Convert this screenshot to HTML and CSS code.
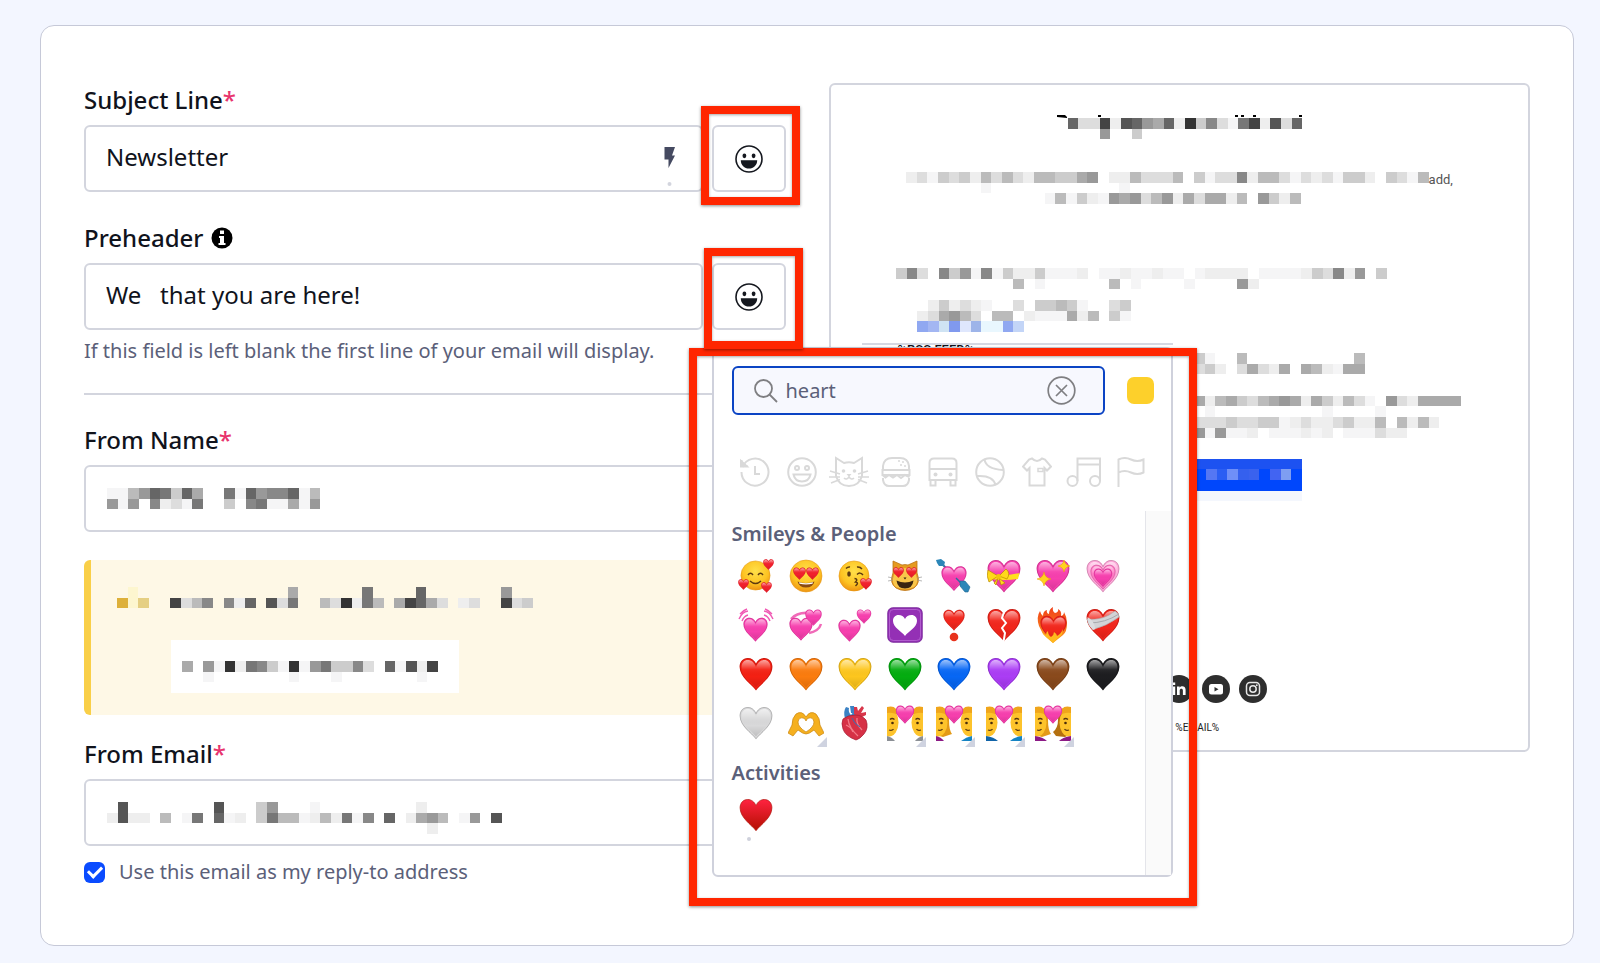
FILE: index.html
```html
<!DOCTYPE html>
<html lang="en">
<head>
<meta charset="utf-8">
<title>Newsletter settings</title>
<link rel="stylesheet" href="styles.css">
</head>
<body>
<svg class="defs" aria-hidden="true">
  <defs>
    <linearGradient id="gloss" x1="0" y1="0" x2="0" y2="1">
      <stop offset="0" stop-color="#fff" stop-opacity=".6"/>
      <stop offset=".35" stop-color="#fff" stop-opacity=".05"/>
      <stop offset=".6" stop-color="#000" stop-opacity="0"/>
      <stop offset="1" stop-color="#000" stop-opacity=".12"/>
    </linearGradient>
    <linearGradient id="suit" x1="0" y1="0" x2="0" y2="1">
      <stop offset="0" stop-color="#ff2340"/>
      <stop offset="1" stop-color="#b30f00"/>
    </linearGradient>
    <radialGradient id="skin" cx=".5" cy=".35" r=".65">
      <stop offset="0" stop-color="#ffe04a"/>
      <stop offset=".65" stop-color="#fdc423"/>
      <stop offset="1" stop-color="#ee9412"/>
    </radialGradient>
    <linearGradient id="flame" x1="0" y1="0" x2="0" y2="1">
      <stop offset="0" stop-color="#f0401a"/>
      <stop offset="1" stop-color="#ff9a1c"/>
    </linearGradient>
    <symbol id="heart" viewBox="0 0 34 34">
      <path fill="currentColor" d="M17 33.500C12.500 27 .6 20.500.6 9.800.6 4.500 4 1 8.700 1c3.700 0 6.700 2 8.300 5.600C18.600 3 21.600 1 25.300 1c4.700 0 8.100 3.500 8.100 8.800C33.400 20.500 21.500 27 17 33.500z"/>
      <path fill="none" stroke="#000" stroke-opacity=".17" d="M17 32.700C12.500 26.600 1.100 20 1.100 9.800c0-5 3.200-8.300 7.600-8.300 3.700 0 6.700 2.300 8.300 6.200 1.600-3.900 4.600-6.200 8.300-6.200 4.400 0 7.600 3.300 7.600 8.300C32.900 20 21.500 26.600 17 32.700z"/>
      <path fill="url(#gloss)" d="M17 30.500C13 25 2.600 19.500 2.600 10c0-4.300 2.600-7 6.100-7 3.700 0 6.700 2.600 8.300 7.200 1.600-4.600 4.600-7.200 8.300-7.200 3.500 0 6.100 2.700 6.100 7C31.400 19.500 21 25 17 30.500z"/>
    </symbol>
    <symbol id="face" viewBox="0 0 34 34">
      <circle cx="17" cy="17" r="16" fill="url(#skin)" stroke="#e59a1c" stroke-width=".6"/>
    </symbol>
    <symbol id="grin" viewBox="0 0 28 28">
      <circle cx="14" cy="14" r="13" fill="#fff" stroke="#15181f" stroke-width="1.600"/>
      <ellipse cx="9.400" cy="10.800" rx="1.900" ry="2.400" fill="#15181f"/>
      <ellipse cx="18.600" cy="10.800" rx="1.900" ry="2.400" fill="#15181f"/>
      <path fill="#15181f" d="M5.800 15.300h16.400c0 5-3.700 8.300-8.200 8.300s-8.200-3.300-8.200-8.300z"/>
    </symbol>
    <symbol id="couple" viewBox="0 0 36 36">
      <ellipse cx="2" cy="17.500" rx="9.500" ry="14" fill="#fdc32b"/>
      <ellipse cx="34" cy="17.500" rx="9.500" ry="14" fill="#fdc32b"/>
      <path fill="#f0a51b" d="M0 2q10-3 12 9-5-4-12-3zM36 2q-10-3-12 9 5-4 12-3z"/>
      <path fill="none" stroke="#56350f" stroke-width="1.300" d="M3 14.500q2-2 4.500 0M28.500 14.500q2-2 4.500 0M2 25q3 1 4.500-.8M29.500 24.200q1.500 1.800 4.500.8"/>
      <circle cx="5.500" cy="18" r="1.300" fill="#4a2b0a"/><circle cx="30.500" cy="18" r="1.300" fill="#4a2b0a"/>
      <svg x="8" y="0" width="20" height="19" viewBox="0 0 34 34" color="#f73fae"><use href="#heart"/></svg>
    </symbol>
  </defs>
</svg>

<main class="card">
  <form class="form">
    <div class="field">
      <label class="label" for="subject">Subject Line<span class="req">*</span></label>
      <div class="row">
        <div class="control">
          <input class="input" id="subject" type="text" value="Newsletter">
          <button class="bolt" type="button" aria-label="Insert personalization">
            <svg width="12" height="40" viewBox="0 0 12 40"><path fill="#454a61" d="M.5 0H11L8 8.500h3L4.500 21v-8.500h-4z"/><circle cx="5.500" cy="37" r="2" fill="#d3d5de"/></svg>
          </button>
        </div>
        <div class="anchor">
          <button class="emoji-btn" type="button" aria-label="Insert emoji"><svg width="28" height="28"><use href="#grin"/></svg></button>
          <span class="frame frame-subject"></span>
        </div>
      </div>
    </div>

    <div class="field">
      <label class="label" for="preheader">Preheader
        <svg class="info" width="22" height="22" viewBox="0 0 22 22"><circle cx="11" cy="11" r="10.500"/><path fill="#fff" d="M9 3.500h4v3.500H9zM8 9h5v7h1.500v2h-7v-2H9v-5H8z"/></svg>
      </label>
      <div class="row">
        <div class="control"><input class="input" id="preheader" type="text" value="We &nbsp; that you are here!"></div>
        <div class="anchor">
          <button class="emoji-btn" type="button" aria-label="Insert emoji"><svg width="28" height="28"><use href="#grin"/></svg></button>
          <section class="picker" aria-label="Emoji picker">
            <div class="picker-top">
              <div class="search">
                <svg width="24" height="24" viewBox="0 0 24 24" fill="none" stroke="#7f7f82" stroke-width="1.800"><circle cx="9.500" cy="9.500" r="8.500"/><path d="M15.500 15.500l7.500 7.500"/></svg>
                <input class="search-input" type="text" value="heart" aria-label="Search emoji">
                <button class="plain" type="button" aria-label="Clear"><svg width="29" height="29" viewBox="0 0 29 29" fill="none" stroke="#7f7f82" stroke-width="1.700"><circle cx="14.500" cy="14.500" r="13.300"/><path d="M9 9l11 11M20 9L9 20"/></svg></button>
              </div>
              <button class="tone" type="button" aria-label="Skin tone"></button>
            </div>
            <nav class="cats">
              <button class="plain" type="button" aria-label="Recent"><svg width="30" height="30" viewBox="0 0 30 30"><path d="M2.500 10A13.500 13.500 0 1 1 1.500 15M1.500 3v6h6M15 9v8h5"/><path fill="#d9d9d9" d="M1 4l6 5.500H1z"/></svg></button>
              <button class="plain" type="button" aria-label="Smileys"><svg width="30" height="30" viewBox="0 0 30 30"><circle cx="15" cy="15" r="13.800"/><circle cx="10" cy="11" r="2"/><circle cx="20" cy="11" r="2"/><path d="M6.500 17.500h17c-1 4.500-4.500 7-8.500 7s-7.500-2.500-8.500-7z"/></svg></button>
              <button class="plain" type="button" aria-label="Animals"><svg width="40" height="32" viewBox="0 0 40 32"><path d="M7 20V2l8 5q5-1.500 10 0l8-5v18q-3 10-13 10T7 20z"/><path stroke-width="1.600" d="M1 15l10 3M0 21h11M2 27l9-3.500M39 15l-10 3M40 21H29M38 27l-9-3.500M15 22q2.500 2.500 5-1 2.500 3.500 5 1"/><path fill="#d9d9d9" stroke="none" d="M17.500 18h5L20 21z"/><g fill="#d9d9d9" stroke="none"><circle cx="14.500" cy="15" r="1.800"/><circle cx="25.500" cy="15" r="1.800"/></g></svg></button>
              <button class="plain" type="button" aria-label="Food"><svg width="30" height="30" viewBox="0 0 30 30"><path d="M2 13V9q1-8 9-8h8q8 0 9 8v4z"/><path d="M1.500 13h27v5h-27zM1.500 18l3 2.500L8 18l4 2.500L16 18l4 3 4-3 4.500 2M2 21v2q1 6 6 6h14q5 0 6-6v-2"/><path stroke-width="1.500" d="M17 4h2M21 5h2M19 8h2M23 9h2"/></svg></button>
              <button class="plain" type="button" aria-label="Travel"><svg width="30" height="30" viewBox="0 0 30 30"><path d="M1.500 23V6q0-4.500 4.500-4.500h18Q28.500 1.500 28.500 6v17zM1.500 12h27M2.500 23v5.500h5V23M22.500 23v5.500h5V23"/><g fill="#d9d9d9" stroke="none"><circle cx="7.500" cy="17.500" r="2"/><circle cx="22.500" cy="17.500" r="2"/></g></svg></button>
              <button class="plain" type="button" aria-label="Sports"><svg width="30" height="30" viewBox="0 0 30 30"><circle cx="15" cy="15" r="13.800"/><path d="M9.500 2q1 10 18.500 11M2 19q16-1 18.500 9"/></svg></button>
              <button class="plain" type="button" aria-label="Objects"><svg width="30" height="30" viewBox="0 0 30 30"><path d="M10 1.500q5 5 10 0l3 1 6 7-4 4-2.500-2.500v17.500h-15V11L5 13.500l-4-4 6-7z"/><path stroke-width="1.500" d="M16 11.500h5v3h-5z"/></svg></button>
              <button class="plain" type="button" aria-label="Music"><svg width="36" height="30" viewBox="0 0 36 30"><path d="M11.500 24V1.500H34V24M11.500 7.500H34"/><circle cx="6.500" cy="24" r="5"/><circle cx="29" cy="24" r="5"/></svg></button>
              <button class="plain" type="button" aria-label="Flags"><svg width="28" height="30" viewBox="0 0 28 30"><path d="M1.500 30V2.500q6-3 12.500 0t12.500 0v13q-6 3-12.500 0t-12.500 0"/></svg></button>
            </nav>
            <div class="picker-body">
              <div class="groups">
                <h3 class="group-title">Smileys &amp; People</h3>
                <div class="grid">
                  <button class="cell" type="button" aria-label="Smiling face with hearts"><svg width="36" height="34" viewBox="0 0 36 34"><svg x="2" y="1" width="31" height="31"><use href="#face"/></svg><path fill="none" stroke="#5d3a10" stroke-width="1.500" d="M10 16q2.500-3.500 5 0M20 16q2.500-3.500 5 0M12 22q5.500 5 11 0"/><svg x="25" y="0" width="11" height="11" color="#f2202c"><use href="#heart"/></svg><svg x="0" y="20" width="11" height="11" color="#f2202c"><use href="#heart"/></svg><svg x="23" y="23" width="11" height="11" color="#f2202c"><use href="#heart"/></svg></svg></button>
                  <button class="cell" type="button" aria-label="Heart eyes"><svg width="34" height="34" viewBox="0 0 34 34"><use href="#face" width="34" height="34"/><svg x="4" y="8" width="13" height="13" color="#f2202c"><use href="#heart"/></svg><svg x="17" y="8" width="13" height="13" color="#f2202c"><use href="#heart"/></svg><path fill="#8a4a10" d="M8.500 22.500q8.500 3 17 0-1.500 6-8.500 6t-8.500-6z"/><path fill="#fff" d="M10 23.300q7 2 14 0l-.5 1.500q-6.500 1.500-13 0z"/></svg></button>
                  <button class="cell" type="button" aria-label="Blowing a kiss"><svg width="34" height="34" viewBox="0 0 34 34"><svg x="0" y="1" width="32" height="32"><use href="#face"/></svg><ellipse cx="11" cy="15" rx="1.800" ry="2.800" fill="#5d3a10"/><path fill="none" stroke="#5d3a10" stroke-width="1.500" d="M8 9.500q2-2 4-1.500M19 8q3-.5 5 2M19 15.500q3-3 6 .5M16.500 19.500q4 .5 1 3.500 4 .5 0 4"/><svg x="22" y="19" width="12" height="12" color="#f2202c"><use href="#heart"/></svg></svg></button>
                  <button class="cell" type="button" aria-label="Heart eyes cat"><svg width="34" height="34" viewBox="0 0 34 34"><path fill="#e59b20" stroke="#bd7415" stroke-width=".8" d="M5 14L5 2l9 4q3-.8 6 0l9-4v12q4 10-3 15-9 5-18 0-7-5-3-15z"/><path fill="#f9c64a" d="M6 16q11-14 22 0 3 8-2 12-9 4-18 0-5-4-2-12z"/><svg x="5" y="8" width="11" height="11" color="#f2202c"><use href="#heart"/></svg><svg x="18" y="8" width="11" height="11" color="#f2202c"><use href="#heart"/></svg><path fill="#3a2510" d="M15.500 18.500h3L17 20.500zM8.500 21.500q8.500 4 17 0-1 8-8.500 8t-8.500-8z"/><path stroke="#999" stroke-width=".7" d="M0 18l5 1M0 22l5-1M34 18l-5 1M34 22l-5-1"/></svg></button>
                  <button class="cell" type="button" aria-label="Heart with arrow"><svg width="36" height="34" viewBox="0 0 36 34"><path stroke="#3a6f9a" stroke-width="2" d="M4 3l26 26"/><svg x="5" y="6" width="26" height="27" color="#f73fae"><use href="#heart"/></svg><path fill="#2b86b8" d="M0 1l5-1 4 3-1 4-5 0-2-3z"/><path fill="none" stroke="#2b6f9f" stroke-width="1.500" d="M20 19l6 6"/><path fill="#2b86b8" stroke="#1f6690" stroke-width=".6" d="M24 22l5 0 5 6-2 5-3 0-5-6z"/></svg></button>
                  <button class="cell" type="button" aria-label="Heart with ribbon"><svg width="34" height="34" viewBox="0 0 34 34"><svg width="34" height="34" color="#f73fae"><use href="#heart"/></svg><path fill="#ffe01e" d="M1.500 15q15 3 31-1l-1.500 6q-14 2-27.500 0z"/><path fill="#ffd91a" stroke="#b98a00" stroke-width=".7" d="M11 17L1 11q-2 6 1 12zM12 17l7-7q5 4 1 10zM11 19l-4 5 2 2zM12 19l2 7 4-2z"/><circle cx="11.500" cy="17.500" r="2.500" fill="#f4c40e"/></svg></button>
                  <button class="cell" type="button" aria-label="Sparkling heart"><svg width="34" height="34" viewBox="0 0 34 34"><svg width="34" height="34" color="#f73fae"><use href="#heart"/></svg><path fill="#ffd21f" stroke="#e8a300" stroke-width=".5" d="M8 13q1 6 7 7-6 1-7 7-1-6-7-7 6-1 7-7zM28 1q.8 5 6 6-5.200 1-6 6-.8-5-6-6 5.200-1 6-6z"/></svg></button>
                  <button class="cell" type="button" aria-label="Growing heart"><svg width="34" height="34" viewBox="0 0 34 34"><svg width="34" height="34" color="#ffa9da"><use href="#heart"/></svg><svg x="3.500" y="5" width="27" height="26" color="#ff78c4"><use href="#heart"/></svg><svg x="7" y="9" width="20" height="19" color="#f73fae"><use href="#heart"/></svg></svg></button>

                  <button class="cell" type="button" aria-label="Beating heart"><svg width="36" height="34" viewBox="0 0 36 34"><svg x="4" y="9" width="27" height="25" color="#f73fae"><use href="#heart"/></svg><path fill="none" stroke="#f05ab4" stroke-width="1.400" d="M1 11q3-7 9-8M2 6q4-4 7-5M4 13q2-5 6-6M35 11q-3-7-9-8M34 6q-4-4-7-5M32 13q-2-5-6-6"/></svg></button>
                  <button class="cell" type="button" aria-label="Revolving hearts"><svg width="34" height="34" viewBox="0 0 34 34"><path fill="none" stroke="#f06ab8" stroke-width="2.500" d="M2 11Q8 4 20 5M20 25q10-2 12-9"/><svg x="0" y="9" width="24" height="24" color="#f73fae"><use href="#heart"/></svg><svg x="16" y="1" width="17" height="17" color="#f73fae"><use href="#heart"/></svg></svg></button>
                  <button class="cell" type="button" aria-label="Two hearts"><svg width="34" height="34" viewBox="0 0 34 34"><svg x="0" y="11" width="23" height="23" color="#f73fae"><use href="#heart"/></svg><svg x="18" y="1" width="16" height="15" color="#f73fae"><use href="#heart"/></svg></svg></button>
                  <button class="cell" type="button" aria-label="Heart decoration"><svg width="36" height="36" viewBox="0 0 36 36"><rect x=".8" y=".8" width="34.400" height="34.400" rx="5" fill="#9430b5" stroke="#7a2a9c"/><rect x="2.500" y="2.500" width="31" height="31" rx="4" fill="none" stroke="#b968d4" stroke-width=".8"/><path fill="#fff" d="M18 29C15 24.500 6 20.500 6 14c0-3.500 2.200-6 5.500-6 3 0 5.300 1.500 6.500 4 1.200-2.500 3.500-4 6.500-4 3.300 0 5.500 2.500 5.500 6 0 6.500-9 10.500-12 15z"/></svg></button>
                  <button class="cell" type="button" aria-label="Heart exclamation"><svg width="34" height="34" viewBox="0 0 34 34"><svg x="6" y="1" width="22" height="22" color="#f2261c"><use href="#heart"/></svg><circle cx="17" cy="29" r="4.300" fill="#e8321c"/></svg></button>
                  <button class="cell" type="button" aria-label="Broken heart"><svg width="34" height="34" viewBox="0 0 34 34"><svg width="34" height="34" color="#f2261c"><use href="#heart"/></svg><path fill="none" stroke="#fff" stroke-width="2" d="M17 4l-2 6 4 5-4 5 3 5-1.500 9"/></svg></button>
                  <button class="cell" type="button" aria-label="Heart on fire"><svg width="34" height="36" viewBox="0 0 34 36"><path fill="url(#flame)" d="M3 19Q0 10 4 4q1 4 3 5 0-5 4-6-1 3 2 4 0-5 4-7-1 4 2 6 4-1 3-4 4 2 3 7 3-1 3-4 3 5 3 11 0 9-4 12l-10 8L7 27z"/><svg x="4" y="8" width="27" height="27" color="#f2261c"><use href="#heart"/></svg><path fill="#ffb81e" d="M6 22q1 5 4 6 0-3 2-4 0 4 3 6 3-2 3-5 3 2 3 4 4-2 6-7 0 6-4 8l-6 6-6-5q-5-4-5-9z"/></svg></button>
                  <button class="cell" type="button" aria-label="Mending heart"><svg width="34" height="34" viewBox="0 0 34 34"><svg width="34" height="34" color="#f2261c"><use href="#heart"/></svg><path fill="#d2d3d6" stroke="#a8a9ad" stroke-width=".6" d="M1 11q16 2 28-8 4 2 4 6-12 9-26 12.500Q2 17 1 11z"/><path fill="none" stroke="#a8a9ad" d="M3 15q16 0 30-9"/><path fill="#dcdde0" d="M1.500 9q6 3 8 12l-2.500 1Q1 16 1.500 9z"/></svg></button>

                  <button class="cell red" type="button" aria-label="Red heart"><svg width="34" height="34"><use href="#heart"/></svg></button>
                  <button class="cell orange" type="button" aria-label="Orange heart"><svg width="34" height="34"><use href="#heart"/></svg></button>
                  <button class="cell yellow" type="button" aria-label="Yellow heart"><svg width="34" height="34"><use href="#heart"/></svg></button>
                  <button class="cell green" type="button" aria-label="Green heart"><svg width="34" height="34"><use href="#heart"/></svg></button>
                  <button class="cell blue" type="button" aria-label="Blue heart"><svg width="34" height="34"><use href="#heart"/></svg></button>
                  <button class="cell purple" type="button" aria-label="Purple heart"><svg width="34" height="34"><use href="#heart"/></svg></button>
                  <button class="cell brown" type="button" aria-label="Brown heart"><svg width="34" height="34"><use href="#heart"/></svg></button>
                  <button class="cell black" type="button" aria-label="Black heart"><svg width="34" height="34"><use href="#heart"/></svg></button>

                  <button class="cell white" type="button" aria-label="White heart"><svg width="34" height="34"><use href="#heart"/></svg></button>
                  <button class="cell toned" type="button" aria-label="Heart hands"><svg width="36" height="34" viewBox="0 0 36 34"><path fill="#f5b01f" stroke="#c98510" stroke-width=".7" d="M18 11Q14 4 8 8q-4 4-4 11l-4 8 5 3 5-6q5 4 8 4t8-4l5 6 5-3-4-8q0-7-4-11-6-4-10 3z"/><path fill="#fff" stroke="#c98510" stroke-width=".7" d="M18 26q-8-5-8-10 1-5 5-4 2 0 3 3 1-3 3-3 4-1 5 4 0 5-8 10z"/></svg></button>
                  <button class="cell" type="button" aria-label="Anatomical heart"><svg width="28" height="36" viewBox="0 0 28 36"><path fill="#3b82c4" d="M4 14Q2 6 5 2l3 1q-1 4 2 7l3-4 3 3-5 8zM9 1h4l1 7h-4z"/><path fill="#d8364a" d="M13 9V2h3l1 4 4-5 2 2-3 5 5-1v3l-6 3z"/><path fill="#d63146" stroke="#a31d33" stroke-width=".7" d="M2 14q5-4 12-4t11 5q3 8-2 14-4 5-8 6Q4 31 2 24q-2-6 0-10z"/><path fill="none" stroke="#f27b88" stroke-width="1.300" d="M7 14q1 9 10 17M16 13q-1 6 5 12M5 20q5 2 7 7"/><path fill="none" stroke="#3b6fb4" d="M11 13q2 6 8 9"/></svg></button>
                  <button class="cell toned" type="button" aria-label="Couple with heart"><svg width="36" height="36" viewBox="0 0 36 36"><use href="#couple"/><path fill="#8b8f95" d="M0 36v-5q5 1 8 5zM36 36v-5q-5 1-8 5z"/></svg></button>
                  <button class="cell toned" type="button" aria-label="Couple: woman, man"><svg width="36" height="36" viewBox="0 0 36 36"><path fill="#e39a17" d="M0 3q13-3 13 12 0 10 3 14l-9 3-7-2z"/><use href="#couple"/><path fill="#8c1a86" d="M0 36v-5q5 1 8 5z"/><path fill="#1584c4" d="M36 36v-5q-6 1-11 5z"/></svg></button>
                  <button class="cell toned" type="button" aria-label="Couple: man, man"><svg width="36" height="36" viewBox="0 0 36 36"><use href="#couple"/><path fill="#1164a8" d="M0 36v-5q8 1 12 5z"/><path fill="#1584c4" d="M36 36v-5q-8 1-12 5z"/></svg></button>
                  <button class="cell toned" type="button" aria-label="Couple: woman, woman"><svg width="36" height="36" viewBox="0 0 36 36"><path fill="#e39a17" d="M0 3q13-3 13 12 0 10 3 14l-9 3-7-2z"/><path fill="#b4700f" d="M36 3q-13-3-13 12 0 8-5 12l3 4 9 1 6-3z"/><use href="#couple"/><path fill="#8c1a86" d="M0 36v-5q8 1 12 5zM36 36v-5q-8 1-12 5z"/></svg></button>
                </div>
                <h3 class="group-title">Activities</h3>
                <div class="grid">
                  <button class="cell dotted" type="button" aria-label="Heart suit"><svg width="34" height="34" viewBox="0 0 34 34"><path fill="url(#suit)" stroke="#b0140c" stroke-width=".7" d="M17 32.700C12.500 26.600 1.100 20 1.100 9.800c0-5 3.200-8.300 7.600-8.300 3.700 0 6.700 2.300 8.300 6.200 1.600-3.900 4.600-6.200 8.300-6.200 4.400 0 7.600 3.300 7.600 8.300C32.900 20 21.500 26.600 17 32.700z"/></svg></button>
                </div>
              </div>
              <div class="scrollbar"></div>
            </div>
          </section>
          <span class="frame frame-preheader"></span>
          <span class="frame frame-picker"></span>
        </div>
      </div>
      <p class="help">If this field is left blank the first line of your email will display.</p>
    </div>

    <hr class="rule">

    <div class="field">
      <label class="label" for="from-name">From Name<span class="req">*</span></label>
      <div class="control">
        <input class="input" id="from-name" type="text">
        <svg class="mosaic over-input" data-rows="ffb967c6a..7f69886fb|9f9.8edf7..c.87ffaf9"></svg>
      </div>
    </div>

    <div class="notice">
      <svg class="mosaic" data-rows=".y..............a......7....6.......9..|gyh..4db8.8e6.5d7..bd3e7b.a46ad.ed..4dc"></svg>
      <div class="notice-chip"><svg class="mosaic" data-rows="a.9f3e78cf3f97cc8d.6f5e4|..f.......f...f.......f."></svg></div>
    </div>

    <div class="field">
      <label class="label" for="from-email">From Email<span class="req">*</span></label>
      <div class="control">
        <input class="input" id="from-email" type="text">
        <svg class="mosaic over-input" data-rows=".5........5...c9...f.........e.......|e5ee.b.f7.6fe.c7bbfebe7f8.6.ea9b.f9.5|..............................e......"></svg>
      </div>
      <label class="check"><input class="check-box" type="checkbox" checked><span>Use this email as my reply-to address</span></label>
    </div>
  </form>

  <article class="preview">
    <div class="title">
      <svg class="marks" width="245" height="4" viewBox="0 0 245 4"><path d="M0 1h8l2 2v1L0 3zM41 1h3v2h-3zM178 1h3v2h-3zM184 1h3v2h-3zM196 1h3v2h-3zM242 1h3v2h-3z"/></svg>
      <svg class="mosaic" data-rows=".6dd4e569a6e3c8df74e5d6|....9..c..............."></svg>
    </div>
    <div class="lead">
      <svg class="mosaic" data-rows="edfcdcebdbdebbcca9.eebdddb.cfdd8ebbdfdedfcce.cdfb|.......f............f............................|.............fbfcef9a9db9eadaaeb.9ceb............"></svg>
      <span class="lead-end">add,</span>
    </div>
    <svg class="mosaic para" data-rows="c8d.8c9f8fceecfffe.ffeffeff.feeee.ffffecd8e9.c|...........b.f......b.f....f....9e............|..............................................|...ecedef..d.ccbcf..dc........................|..eda9bd.bb.efffaeb.cf........................|..pqrstuvvpw.................................."></svg>
    <div class="feed">%RSS:FEED%</div>
    <svg class="mosaic aside" data-rows="cf..b..........b.........|dce.dadea.abefaa.........|.........................|.........................|aebacdba9aeacebdf.9deaaaa|.f..........f....f........|dddcddccfedeedceeb.bebe..|9f9ffe.fffefe.fffdee....."></svg>
    <button class="cta" type="button" aria-label="Open"><svg class="mosaic" data-rows="ijklm.no"></svg></button>
    <div class="social">
      <a href="#" aria-label="LinkedIn"><svg width="28" height="28" viewBox="0 0 28 28"><circle cx="14" cy="14" r="14" fill="#2e2e2e"/><path fill="#fff" d="M7.500 11.500h2.700V20H7.500zM7.500 7.500h2.700v2.600H7.500zM12 11.500h2.600v1.200c1.500-2.300 6-1.900 6 2V20h-2.700v-4.600c0-2.500-3.200-2.200-3.200 0V20H12z"/></svg></a>
      <a href="#" aria-label="YouTube"><svg width="28" height="28" viewBox="0 0 28 28"><circle cx="14" cy="14" r="14" fill="#2e2e2e"/><rect x="7" y="9" width="14" height="10.500" rx="2.500" fill="#fff"/><path fill="#2e2e2e" d="M12.500 12v4.500l4-2.200z"/></svg></a>
      <a href="#" aria-label="Instagram"><svg width="28" height="28" viewBox="0 0 28 28"><circle cx="14" cy="14" r="14" fill="#2e2e2e"/><g fill="none" stroke="#e6e6e6" stroke-width="1.500"><rect x="7.500" y="7.500" width="13" height="13" rx="3.500"/><circle cx="14" cy="14" r="3.200"/></g><circle cx="17.800" cy="10.200" r=".9" fill="#e6e6e6"/></svg></a>
    </div>
    <div class="merge">%EMAIL%</div>
  </article>
</main>
<script src="script.js"></script>
</body>
</html>
```

FILE: styles.css
```css
* { box-sizing: border-box; }

body {
  margin: 0;
  padding: 25px 26px 15px 40px;
  background: #f3f6ff;
  font-family: "Noto Sans", "Open Sans", sans-serif;
  color: #10131c;
}

.defs { position: absolute; width: 0; height: 0; }

svg { display: block; flex: none; }

.card {
  display: grid;
  grid-template-columns: minmax(0, 1fr) minmax(0, 1fr);
  align-items: start;
  gap: 43px;
  padding: 57px 43px;
  background: #fff;
  border: 1px solid #c6c9d8;
  border-radius: 14px;
}

.form { display: flex; flex-direction: column; }

.field { display: flex; flex-direction: column; gap: 8px; }
.field + .field { margin-top: 29px; }

.label {
  display: flex;
  align-items: center;
  height: 34px;
  font-size: 24px;
  line-height: 34px;
  font-weight: 500;
}
.req { color: #e8336d; }
.info { margin-left: 8px; }

.row { display: flex; gap: 9px; }
.control { position: relative; flex: 1; display: flex; }

.input {
  width: 100%;
  height: 67px;
  padding: 0 20px 4px;
  border: 2px solid #d3d5de;
  border-radius: 6px;
  background: #fff;
  font: inherit;
  font-size: 24px;
  color: #10131c;
}

.plain, .bolt, .cell {
  border: 0;
  padding: 0;
  background: none;
}
.bolt { position: absolute; right: 27px; top: 22px; }

.anchor { position: relative; }
.emoji-btn {
  display: flex;
  align-items: center;
  justify-content: center;
  width: 74px;
  height: 67px;
  padding: 0;
  border: 2px solid #d3d5de;
  border-radius: 6px;
  background: #fff;
}

.frame {
  position: absolute;
  border: 8px solid #ff2600;
  box-shadow: 0 1px 3px rgba(0, 0, 0, .45), inset 0 1px 3px rgba(0, 0, 0, .35);
  pointer-events: none;
}
.frame-subject { left: -11px; top: -19px; width: 99px; height: 99px; }
.frame-preheader { left: -8px; top: -15px; width: 99px; height: 101px; z-index: 4; }
.frame-picker { left: -23px; top: 85px; width: 508px; height: 558px; z-index: 3; }

.help { margin: -3px 0 0; font-size: 20px; line-height: 32px; color: #5b6079; }

.rule { width: 100%; height: 2px; margin: 26px 0 28px; border: 0; background: #d3d5de; }

.notice {
  display: flex;
  flex-direction: column;
  gap: 32px;
  margin: 28px 0 22px;
  padding: 27px 26px 22px;
  border-left: 7px solid #f9cf48;
  border-radius: 6px;
  background: #fef8e6;
}
.notice-chip { align-self: flex-start; margin-left: 54px; padding: 21px 21px 11px 11px; background: #fff; }

.over-input { position: absolute; left: 23px; top: 23px; }

.check {
  display: flex;
  align-items: center;
  gap: 14px;
  margin-top: 2px;
  font-size: 20px;
  line-height: 32px;
  color: #5b6079;
}
.check-box {
  appearance: none;
  width: 21px;
  height: 21px;
  margin: 0;
  border-radius: 6px;
  background: #0a4bff;
  display: grid;
  place-items: center;
}
.check-box::after {
  content: "";
  width: 11px;
  height: 6px;
  margin-bottom: 3px;
  border: solid #fff;
  border-width: 0 0 3px 3px;
  transform: rotate(-45deg);
}

/* Emoji picker */
.picker {
  position: absolute;
  z-index: 2;
  left: 0;
  top: 84px;
  width: 461px;
  border: 2px solid #cfd1dc;
  border-radius: 6px;
  background: #fff;
}
.picker-top { display: flex; align-items: center; justify-content: space-between; padding: 17px 17px 0 18px; }
.search {
  display: flex;
  align-items: center;
  gap: 8px;
  width: 373px;
  height: 49px;
  padding: 0 27px 0 20px;
  border: 2px solid #0b44c4;
  border-radius: 6px;
  background: #f7f8fe;
}
.search-input {
  flex: 1;
  min-width: 0;
  padding: 0;
  border: 0;
  background: none;
  font: inherit;
  font-size: 20px;
  color: #5b6079;
}
.tone { width: 27px; height: 27px; padding: 0; border: 0; border-radius: 7px; background: #fdd02b; }

.cats { display: grid; grid-template-columns: repeat(9, 1fr); padding: 41px 16px 23px 18px; }
.cats .plain { display: flex; align-items: center; justify-content: center; height: 32px; }
.cats svg { fill: none; stroke: #d9d9d9; stroke-width: 2; }

.picker-body { display: flex; }
.groups { flex: 1; padding: 5px 17px 28px 18px; }
.scrollbar { width: 26px; background: #fafafa; border-left: 1px solid #e4e5ea; }

.group-title { margin: 0; font-size: 20px; line-height: 35px; font-weight: 600; color: #5b6079; }
.grid { display: grid; grid-template-columns: repeat(8, 1fr); grid-auto-rows: 49px; margin-bottom: 8px; }
.cell { position: relative; display: flex; align-items: center; justify-content: center; }
.toned::after {
  content: "";
  position: absolute;
  right: 4px;
  bottom: 0;
  border: solid transparent;
  border-width: 0 0 10px 10px;
  border-bottom-color: #cfd3e0;
}
.dotted::after {
  content: "";
  position: absolute;
  left: 15px;
  bottom: -2px;
  width: 4px;
  height: 4px;
  border-radius: 2px;
  background: #cfd1dc;
}
.red { color: #f42013; }
.orange { color: #fb7c0e; }
.yellow { color: #fdc61e; }
.green { color: #04ad10; }
.blue { color: #0767f5; }
.purple { color: #ab3df5; }
.brown { color: #8a4a1c; }
.black { color: #1d1d20; }
.white { color: #d9d9da; }

/* Email preview */
.preview {
  display: flex;
  flex-direction: column;
  align-items: center;
  padding: 29px 0 14px;
  border: 2px solid #d3d5de;
  border-radius: 6px;
  font-family: Roboto, sans-serif;
}
.lead { display: flex; align-items: flex-start; margin-top: 33px; }
.lead-end { font-size: 13px; line-height: 16px; color: #555; }
.para { margin-top: 64px; margin-right: 76px; }
.feed {
  width: 311px;
  margin-top: 11px;
  padding-left: 36px;
  align-self: flex-start;
  margin-left: 31px;
  border-top: 2px solid #d5d8e2;
  font-size: 13px;
  line-height: 10px;
  font-weight: 500;
}
.aside { align-self: flex-end; margin: -2px 67px 0 0; }
.cta {
  display: flex;
  align-items: flex-start;
  justify-content: flex-end;
  align-self: flex-end;
  width: 105px;
  height: 32px;
  margin-top: 21px;
  margin-right: 226px;
  padding: 0 11px;
  border: 0;
  border-top: 10px solid #1d52f1;
  background: #0047fc;
  box-shadow: 0 10px 0 #f4f7fd;
}
.social { display: flex; gap: 9px; margin: 184px 0 0 74px; }
.merge { margin: 17px 0 0 36px; font-size: 10px; line-height: 16px; color: #222; }
```

FILE: script.js
```js
// Renders blurred-out text: each character of data-rows is one square of the mosaic.
// 0-e are greys from black to light, f is the faintest grey, "." is empty.
const TINTS = {
  f: '#f5f5f6',
  p: '#90a8f1', q: '#a3b6f2', r: '#cfe3f3', s: '#8099ee', t: '#dfe7fd',
  u: '#9db4e9', v: '#e9f7fe', w: '#c3d5f7',
  g: '#ddb03a', h: '#e5cf83', y: '#fdf6cf',
  i: '#5577f3', j: '#2b5ef3', k: '#6f8ff8', l: '#3560ee', m: '#3a62ee',
  n: '#4264f2', o: '#7e9ef2'
};
const CELL = 32 / 3;
const NS = 'http://www.w3.org/2000/svg';

document.querySelectorAll('.mosaic').forEach((svg) => {
  const rows = svg.dataset.rows.split('|');
  const width = Math.round(rows[0].length * CELL);
  const height = Math.round(rows.length * CELL);
  svg.setAttribute('width', width);
  svg.setAttribute('height', height);
  rows.forEach((row, y) => {
    [...row].forEach((key, x) => {
      if (key === '.') return;
      const left = Math.round(x * CELL);
      const top = Math.round(y * CELL);
      const rect = document.createElementNS(NS, 'rect');
      rect.setAttribute('x', left);
      rect.setAttribute('y', top);
      rect.setAttribute('width', Math.round((x + 1) * CELL) - left);
      rect.setAttribute('height', Math.round((y + 1) * CELL) - top);
      rect.setAttribute('fill', TINTS[key] || '#' + key.repeat(6));
      svg.appendChild(rect);
    });
  });
});
```
